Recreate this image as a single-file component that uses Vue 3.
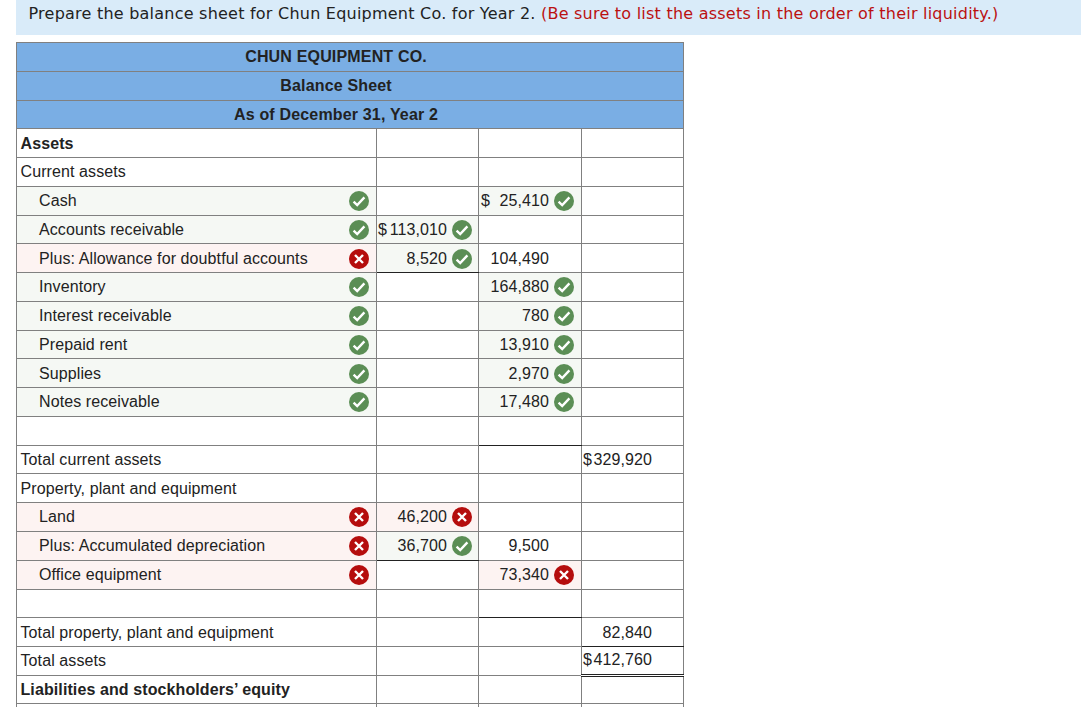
<script setup>
// status: 'ok' = green tick, 'no' = red cross, undefined = plain cell
const rows = [
  { label: 'Assets', bold: true },
  { label: 'Current assets' },
  { label: 'Cash', indent: true, status: 'ok', c3: { dollar: true, value: '25,410', status: 'ok' } },
  { label: 'Accounts receivable', indent: true, status: 'ok', c2: { dollar: true, value: '113,010', status: 'ok' } },
  { label: 'Plus: Allowance for doubtful accounts', indent: true, status: 'no', c2: { value: '8,520', status: 'ok', line: 'single' }, c3: { value: '104,490' } },
  { label: 'Inventory', indent: true, status: 'ok', c3: { value: '164,880', status: 'ok' } },
  { label: 'Interest receivable', indent: true, status: 'ok', c3: { value: '780', status: 'ok' } },
  { label: 'Prepaid rent', indent: true, status: 'ok', c3: { value: '13,910', status: 'ok' } },
  { label: 'Supplies', indent: true, status: 'ok', c3: { value: '2,970', status: 'ok' } },
  { label: 'Notes receivable', indent: true, status: 'ok', c3: { value: '17,480', status: 'ok' } },
  { label: '', c3: { line: 'single' } },
  { label: 'Total current assets', c4: { dollar: true, value: '329,920' } },
  { label: 'Property, plant and equipment' },
  { label: 'Land', indent: true, status: 'no', c2: { value: '46,200', status: 'no' } },
  { label: 'Plus: Accumulated depreciation', indent: true, status: 'no', c2: { value: '36,700', status: 'ok', line: 'single' }, c3: { value: '9,500' } },
  { label: 'Office equipment', indent: true, status: 'no', c3: { value: '73,340', status: 'no' } },
  { label: '', c3: { line: 'single' } },
  { label: 'Total property, plant and equipment', c4: { value: '82,840', line: 'single' } },
  { label: 'Total assets', c4: { dollar: true, value: '412,760', line: 'double' } },
  { label: 'Liabilities and stockholders’ equity', bold: true, tight: true },
  { label: '' },
]

const columns = ['c2', 'c3', 'c4']
</script>

<template>
  <div class="page">
    <p class="prompt">
      Prepare the balance sheet for Chun Equipment Co. for Year 2.
      <span class="hint">(Be sure to list the assets in the order of their liquidity.)</span>
    </p>

    <table class="sheet">
      <colgroup>
        <col class="col-label" />
        <col class="col-a" />
        <col class="col-b" />
        <col class="col-a" />
      </colgroup>
      <thead>
        <tr><th colspan="4">CHUN EQUIPMENT CO.</th></tr>
        <tr><th colspan="4">Balance Sheet</th></tr>
        <tr><th colspan="4">As of December 31, Year 2</th></tr>
      </thead>
      <tbody>
        <tr v-for="(row, i) in rows" :key="i" :class="{ tight: row.tight }">
          <td :class="['label', row.status, { bold: row.bold }]">
            <div class="label-in" :class="{ indent: row.indent }">
              <span>{{ row.label }}</span>
              <svg v-if="row.status === 'ok'" class="mark" viewBox="0 0 20 20">
                <circle cx="10" cy="10" r="10" fill="#5b8e55" />
                <path d="M4.6 10.6l3.6 3.4 7.2-7.6" fill="none" stroke="#fff" stroke-width="2.4" />
              </svg>
              <svg v-else-if="row.status === 'no'" class="mark" viewBox="0 0 20 20">
                <circle cx="10" cy="10" r="10" fill="#b50d0d" />
                <path d="M6 6l8 8M14 6l-8 8" fill="none" stroke="#fff" stroke-width="2.4" />
              </svg>
            </div>
          </td>
          <td
            v-for="c in columns"
            :key="c"
            :class="['num', c, row[c] && row[c].status, row[c] && row[c].line]"
          >
            <div v-if="row[c] && row[c].value" class="num-in">
              <span class="dollar">{{ row[c].dollar ? '$' : '' }}</span>
              <span class="value">{{ row[c].value }}</span>
              <span class="slot">
                <svg v-if="row[c].status === 'ok'" class="mark" viewBox="0 0 20 20">
                  <circle cx="10" cy="10" r="10" fill="#5b8e55" />
                  <path d="M4.6 10.6l3.6 3.4 7.2-7.6" fill="none" stroke="#fff" stroke-width="2.4" />
                </svg>
                <svg v-else-if="row[c].status === 'no'" class="mark" viewBox="0 0 20 20">
                  <circle cx="10" cy="10" r="10" fill="#b50d0d" />
                  <path d="M6 6l8 8M14 6l-8 8" fill="none" stroke="#fff" stroke-width="2.4" />
                </svg>
              </span>
            </div>
          </td>
        </tr>
      </tbody>
    </table>
  </div>
</template>

<style scoped>
.page {
  height: 707px;
  overflow: hidden;
  background: #fff;
}

.prompt {
  margin: 0 0 7px 16px;
  height: 35px;
  padding: 4px 0 0 12.5px;
  box-sizing: border-box;
  background: #d9ebf9;
  font-family: "DejaVu Sans", sans-serif;
  font-size: 16px;
  letter-spacing: 0.23px;
  line-height: 19px;
  color: #222;
}

.hint {
  color: #bb1111;
}

.sheet {
  margin-left: 16px;
  width: 667px;
  table-layout: fixed;
  border-collapse: collapse;
  font-family: "Liberation Sans", Arial, sans-serif;
  font-size: 16px;
  letter-spacing: 0.1px;
  color: #222;
}

.col-label {
  width: 360px;
}

.col-a {
  width: 102px;
}

.col-b {
  width: 103px;
}

th,
td {
  border: 1px solid #808080;
  padding: 0.7px 0 0;
  height: 28.77px;
  box-sizing: border-box;
}

th {
  background: #7aaee4;
  padding-right: 28px;
  font-weight: 700;
  letter-spacing: 0.17px;
  text-align: center;
}

.label {
  padding-left: 3.5px;
}

.bold {
  font-weight: 700;
}

.label-in {
  display: flex;
  align-items: center;
  justify-content: space-between;
  padding-right: 7px;
}

.indent {
  padding-left: 18.5px;
}

.ok {
  background: #f5f8f4;
}

.no {
  background: #fdf3f2;
}

.num-in {
  display: flex;
  align-items: center;
  padding: 0 6px 0 1px;
}

.c3 .num-in {
  padding: 0 7px 0 2px;
}

.dollar {
  flex: none;
}

.value {
  flex: 1;
  text-align: right;
}

.slot {
  flex: none;
  width: 20px;
  height: 20px;
  margin-left: 5px;
}

.mark {
  display: block;
  flex: none;
  width: 20px;
  height: 20px;
}

td.single {
  border-bottom: 1px solid #222;
}

td.double {
  border-bottom: 3px double #222;
}

td.double .num-in {
  margin-top: -1px;
}

.tight td {
  height: 27.8px;
}
</style>

<style>
html,
body {
  margin: 0;
  overflow: hidden;
}
</style>
